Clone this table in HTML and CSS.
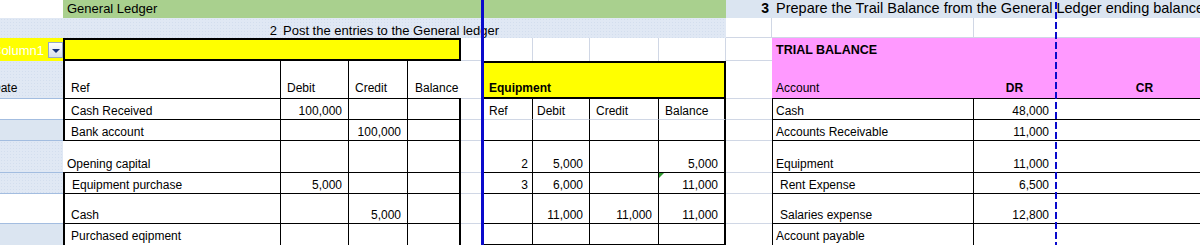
FILE: index.html
```html
<!DOCTYPE html>
<html>
<head>
<meta charset="utf-8">
<link rel="stylesheet" href="styles.css">
</head>
<body>
<div class="sheet">
  <div class="grid">
    <!-- row 1 -->
    <div class="c wh"></div>
    <div class="c green s9 pl4 r1 f13">General Ledger</div>
    <div class="c lb b r1 num3 f14">3</div>
    <div class="c lb s3 pl4 r1 f145">Prepare the Trail Balance from the General Ledger ending balances</div>

    <!-- row 2 -->
    <div class="c dot"></div>
    <div class="c dot num4 f13">2</div>
    <div class="c dot s8 pl2 f13">Post the entries to the General ledger</div>
    <div class="c g"></div>
    <div class="c g"></div>
    <div class="c gb"></div>
    <div class="c gb"></div>

    <!-- row 3 -->
    <div class="c hdr"><span class="hdr-t">Column1</span><span class="dd"></span></div>
    <div class="c ybox s4"></div>
    <div class="c g"></div>
    <div class="c gr"></div>
    <div class="c gr"></div>
    <div class="c gr"></div>
    <div class="c gr"></div>
    <div class="c gb"></div>
    <div class="c pink s3 b pl4 r3 f125">TRIAL BALANCE</div>

    <!-- row 4 -->
    <div class="c dot abl r4"><span class="clip">Date</span></div>
    <div class="c bl2 bk pl6 r4">Ref</div>
    <div class="c bk pl6 r4">Debit</div>
    <div class="c bk pl6 r4">Credit</div>
    <div class="c bbk pl7 r4">Balance</div>
    <div class="c gb"></div>
    <div class="c eq s4 b pl7 r4e">Equipment</div>
    <div class="c gb"></div>
    <div class="c pink bbk pl4 r4">Account</div>
    <div class="c pink bbk b ctr r4">DR</div>
    <div class="c pink bbk b ctr r4">CR</div>

    <!-- row 5 -->
    <div class="c wh abl"></div>
    <div class="c bl2 bk pl6">Cash Received</div>
    <div class="c bk num">100,000</div>
    <div class="c bk"></div>
    <div class="c bk2"></div>
    <div class="c gb"></div>
    <div class="c brk gb pl7">Ref</div>
    <div class="c brk gb pl4">Debit</div>
    <div class="c brk gb pl6">Credit</div>
    <div class="c br2k gb pl6">Balance</div>
    <div class="c gb"></div>
    <div class="c blk bk pl3">Cash</div>
    <div class="c bbk num">48,000</div>
    <div class="c bbk"></div>

    <!-- row 6 -->
    <div class="c lb abl"></div>
    <div class="c bl2 bk pl6">Bank account</div>
    <div class="c bk"></div>
    <div class="c bk num">100,000</div>
    <div class="c bk2"></div>
    <div class="c gb"></div>
    <div class="c brk bbk"></div>
    <div class="c brk bbk"></div>
    <div class="c brk bbk"></div>
    <div class="c br2k bbk"></div>
    <div class="c gb"></div>
    <div class="c blk bk pl3">Accounts Receivable</div>
    <div class="c bbk num">11,000</div>
    <div class="c bbk"></div>

    <!-- row 7 -->
    <div class="c dot abl"></div>
    <div class="c bk pl4">Opening capital</div>
    <div class="c bk"></div>
    <div class="c bk"></div>
    <div class="c bk2"></div>
    <div class="c gb"></div>
    <div class="c brk bbk num4">2</div>
    <div class="c brk bbk num">5,000</div>
    <div class="c brk bbk"></div>
    <div class="c br2k bbk num">5,000</div>
    <div class="c gb"></div>
    <div class="c blk bk pl3">Equipment</div>
    <div class="c bbk num">11,000</div>
    <div class="c bbk"></div>

    <!-- row 8 -->
    <div class="c dot abl"></div>
    <div class="c bl2 bk pl7">Equipment purchase</div>
    <div class="c bk num">5,000</div>
    <div class="c bk"></div>
    <div class="c bk2"></div>
    <div class="c gb"></div>
    <div class="c brk bbk num4">3</div>
    <div class="c brk bbk num">6,000</div>
    <div class="c brk bbk"></div>
    <div class="c br2k bbk num tri">11,000</div>
    <div class="c gb"></div>
    <div class="c blk bk pl7">Rent Expense</div>
    <div class="c bbk num">6,500</div>
    <div class="c bbk"></div>

    <!-- row 9 -->
    <div class="c wh abl"></div>
    <div class="c bl2 bk pl6">Cash</div>
    <div class="c bk"></div>
    <div class="c bk num">5,000</div>
    <div class="c bk2"></div>
    <div class="c gb"></div>
    <div class="c brk bbk"></div>
    <div class="c brk bbk num">11,000</div>
    <div class="c brk bbk num">11,000</div>
    <div class="c br2k bbk num">11,000</div>
    <div class="c gb"></div>
    <div class="c blk bk pl7">Salaries expense</div>
    <div class="c bbk num">12,800</div>
    <div class="c bbk"></div>

    <!-- row 10 -->
    <div class="c lb"></div>
    <div class="c bl2 brk pl6 r10">Purchased eqipment</div>
    <div class="c brk"></div>
    <div class="c brk"></div>
    <div class="c br2k"></div>
    <div class="c"></div>
    <div class="c brk bbk"></div>
    <div class="c brk bbk"></div>
    <div class="c brk bbk"></div>
    <div class="c br2k bbk"></div>
    <div class="c"></div>
    <div class="c blk brk pl3 r10">Account payable</div>
    <div class="c"></div>
    <div class="c"></div>
  </div>
  <div class="pb-solid"></div>
  <div class="pb-dash"></div>
</div>
</body>
</html>
```

FILE: styles.css
```css
* { box-sizing: border-box; }
html, body { margin: 0; padding: 0; }
body {
  width: 1200px;
  height: 245px;
  overflow: hidden;
  background: #fff;
  font-family: "Liberation Sans", Arial, sans-serif;
  font-size: 12px;
  color: #000;
}
.sheet { position: relative; width: 1200px; height: 245px; overflow: hidden; }
.grid {
  display: grid;
  grid-template-columns: 63px 218px 68px 59px 53px 21px 51px 57px 69px 67px 46px 202px 81px 179px;
  grid-template-rows: 18px 20px 23px 38px 21px 21px 32px 21px 30px 21px;
  width: 1234px;
}
.c {
  display: flex;
  align-items: flex-end;
  overflow: hidden;
  white-space: nowrap;
  line-height: 15px;
  min-width: 0;
}
.s3 { grid-column: span 3; }
.s4 { grid-column: span 4; }
.s8 { grid-column: span 8; }
.s9 { grid-column: span 9; }

/* fills */
.wh { background: #fff; }
.lb { background: #dbe5f1; }
.green { background: #a9d08e; }
.pink { background: #ff99ff; }
.dot {
  background-color: #e0e8f4;
  background-image: radial-gradient(circle, #d3deee 0.7px, transparent 0.8px);
  background-size: 3px 3px;
}

/* borders */
.g { border-right: 1px solid #d0d7e5; border-bottom: 1px solid #d0d7e5; }
.gb { border-bottom: 1px solid #d0d7e5; }
.gr { border-right: 1px solid #d0d7e5; }
.abl { border-bottom: 1px solid #a3bde0; }
.bk { border-right: 1px solid #000; border-bottom: 1px solid #000; }
.bk2 { border-right: 2px solid #000; border-bottom: 1px solid #000; }
.brk { border-right: 1px solid #000; }
.br2k { border-right: 2px solid #000; }
.bbk { border-bottom: 1px solid #000; }
.bl2 { border-left: 2px solid #000; }
.blk { border-left: 1px solid #000; }
.ybox { background: #ffff00; border: 2px solid #000; }
.eq {
  background: #ffff00;
  border-top: 2px solid #000;
  border-right: 2px solid #000;
  border-bottom: 2px solid #000;
}

/* text */
.b { font-weight: bold; }
.f13 { font-size: 13px; }
.f14 { font-size: 14px; }
.f145 { font-size: 14.5px; }
.f125 { font-size: 12.5px; }
.pl2 { padding-left: 2px; }
.pl3 { padding-left: 3px; }
.pl4 { padding-left: 4px; }
.pl6 { padding-left: 6px; }
.pl7 { padding-left: 7px; }
.num { justify-content: flex-end; padding-right: 6px; }
.num4 { justify-content: flex-end; padding-right: 4px; }
.num3 { justify-content: flex-end; padding-right: 3px; }
.ctr { justify-content: center; }
.r1 { padding-bottom: 2px; }
.r3 { padding-bottom: 3px; }
.r4 { padding-bottom: 2px; }
.r4e { padding-bottom: 1px; }
.r10 { padding-bottom: 1px; }
.clip { margin-left: -8px; }

/* table header filter cell */
.hdr {
  background: #ffff00;
  color: #fff;
  font-size: 13px;
  justify-content: space-between;
  padding-bottom: 3px;
}
.hdr-t { margin-left: -8px; }
.dd {
  flex: 0 0 15px;
  height: 16px;
  display: flex;
  align-items: center;
  justify-content: center;
  border: 1px solid #94a8c8;
  background: linear-gradient(#fdfdfe, #d6dfec);
}
.dd::after {
  content: "";
  margin-top: 2px;
  border-top: 4px solid #15307a;
  border-left: 4px solid transparent;
  border-right: 4px solid transparent;
}

/* error indicator triangle */
.tri { position: relative; }
.tri::before {
  content: "";
  position: absolute;
  left: 0;
  top: 0;
  border-top: 5px solid #2f9a2f;
  border-right: 5px solid transparent;
}

/* page break lines */
.pb-solid {
  position: absolute;
  left: 481px;
  top: 0;
  width: 3px;
  height: 245px;
  background: #0a0acc;
}
.pb-dash {
  position: absolute;
  left: 1055px;
  top: 2px;
  width: 2px;
  height: 243px;
  background: repeating-linear-gradient(to bottom, #0a0acc 0 7px, transparent 7px 10px);
}
```
